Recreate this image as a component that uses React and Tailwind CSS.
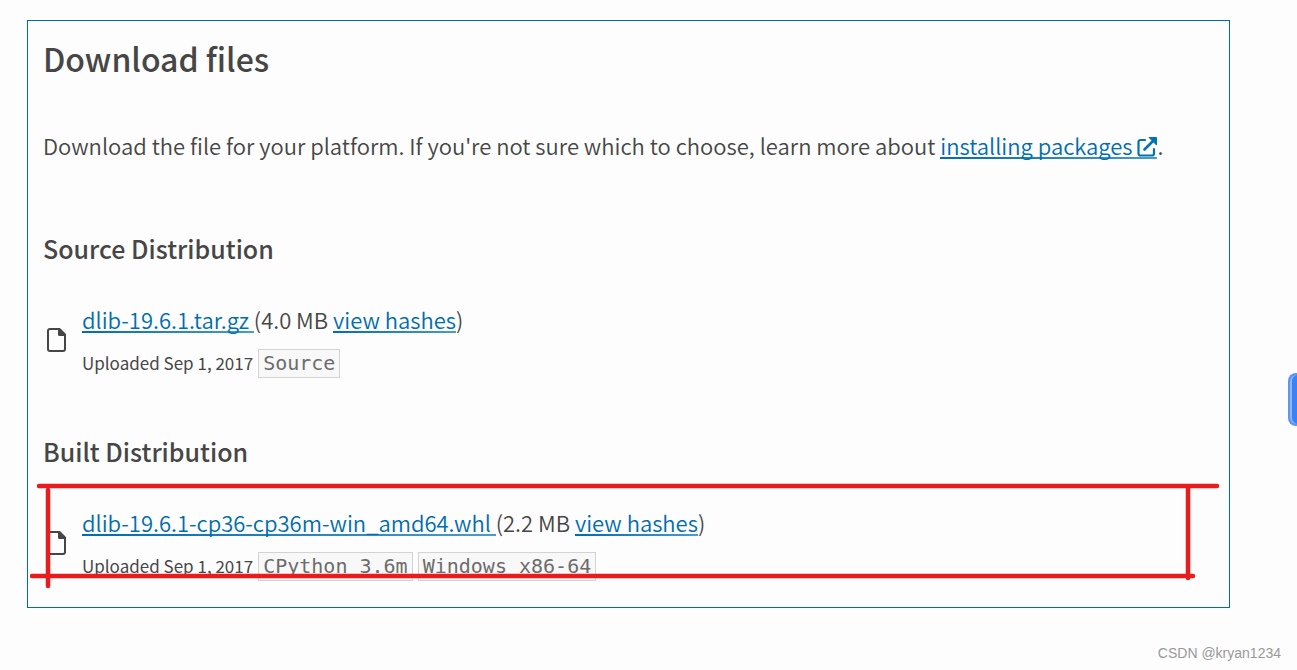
import React from 'react';

const sections = [
  {
    title: 'Source Distribution',
    files: [
      {
        name: 'dlib-19.6.1.tar.gz',
        size: '4.0 MB',
        uploaded: 'Sep 1, 2017',
        tags: ['Source']
      }
    ]
  },
  {
    title: 'Built Distribution',
    files: [
      {
        name: 'dlib-19.6.1-cp36-cp36m-win_amd64.whl',
        size: '2.2 MB',
        uploaded: 'Sep 1, 2017',
        tags: ['CPython 3.6m', 'Windows x86-64']
      }
    ]
  }
];

const FileIcon = () => (
  <svg className="w-5 h-6 shrink-0" viewBox="0 0 20 24" fill="none" aria-hidden="true">
    <path d="M3 1h9.5L18 6.5V21a2 2 0 0 1-2 2H3a2 2 0 0 1-2-2V3a2 2 0 0 1 2-2Z" stroke="#464646" strokeWidth="2" />
    <path d="M11 1h2.5L18.500 6.500V8H12.500A1.500 1.500 0 0 1 11 6.500Z" fill="#464646" />
  </svg>
);

const ExternalIcon = () => (
  <svg className="inline-block w-5 h-5 align-[-2px]" viewBox="0 0 20 20" fill="none" aria-hidden="true">
    <path d="M8 3H3.500A2 2 0 0 0 1.500 5v11.500a2 2 0 0 0 2 2H15a2 2 0 0 0 2-2V12" stroke="#0073b1" strokeWidth="2.200" strokeLinecap="round" />
    <path d="M7.500 12.500 16 4" stroke="#0073b1" strokeWidth="2.600" strokeLinecap="round" />
    <path d="M12 .5h7.500V8Z" fill="#0073b1" stroke="#0073b1" strokeLinejoin="round" />
  </svg>
);

// Link with a fading underline
const Link = ({ children }) => (
  <a
    href="#"
    className="text-[#006dad] bg-[linear-gradient(90deg,#006dad,#4a9bc9)] bg-[length:100%_2px] bg-[position:0_28px] bg-no-repeat"
  >
    {children}
  </a>
);

const FileRow = ({ file }) => (
  <div className="flex items-center gap-[15px] pl-1">
    <FileIcon />
    <div className="flex flex-col gap-3 pr-4">
      <p className="text-[22px] leading-9 font-[350]">
        <Link>{file.name}&nbsp;</Link>({file.size} <Link>view hashes</Link>)
      </p>
      <p className="flex flex-wrap items-baseline gap-[5px] text-[17px] leading-5">
        <span>Uploaded {file.uploaded}</span>
        {file.tags.map((tag) => (
          <code
            key={tag}
            className="border border-[#d3d3d3] bg-[#f8f8f8] px-1 text-[20px] leading-[27px] text-[#6c6c6c] font-['DejaVu_Sans_Mono',monospace]"
          >
            {tag}
          </code>
        ))}
      </p>
    </div>
  </div>
);

// Red marker strokes around the built distribution
const Marker = () => (
  <svg
    className="absolute left-[2px] top-[460px] w-[1196px] h-[112px] pointer-events-none"
    viewBox="0 0 1196 112"
    fill="none"
    stroke="#e81c1c"
    strokeWidth="4.500"
    strokeLinecap="round"
    aria-hidden="true"
  >
    <path d="M9 5H1187" />
    <path d="M2 95H1163" />
    <path d="M18 9V105" />
    <path d="M1158 7V97" />
  </svg>
);

const App = () => {
  return (
    <div className="relative min-h-screen overflow-hidden bg-[#fdfdfd] text-[#464646] font-['Noto_Sans_CJK_SC',sans-serif]">
      <main className="relative mt-5 ml-[27px] mr-[67px] border border-[#006dad] px-[15px] pt-[13px] pb-[26px]">
        <h1 className="text-[32px] leading-[48px] font-medium">Download files</h1>

        <p className="mt-[45px] text-[22px] leading-9 font-[350]">
          Download the file for your platform. If you're not sure which to choose, learn more about{' '}
          <Link>
            installing packages <ExternalIcon />
          </Link>
          .
        </p>

        {sections.map((section) => (
          <section key={section.title} className="mt-[55px] first-of-type:mt-[67px]">
            <h2 className="mb-[35px] text-[25px] leading-9 font-medium">{section.title}</h2>
            {section.files.map((file) => (
              <FileRow key={file.name} file={file} />
            ))}
          </section>
        ))}

        <Marker />
      </main>

      <button
        type="button"
        aria-label="Open side panel"
        className="absolute right-0 top-[373px] h-[53px] w-[9px] rounded-l-lg border-2 border-r-0 border-[#5b95f5] bg-[#3b82f6] shadow-[inset_2px_0_0_#8fb8fb]"
      />
      <p className="absolute right-4 top-[642px] text-[14px] leading-[22px] text-[#999] font-['Liberation_Sans',sans-serif]">
        CSDN @kryan1234
      </p>
    </div>
  );
};

export default App;
